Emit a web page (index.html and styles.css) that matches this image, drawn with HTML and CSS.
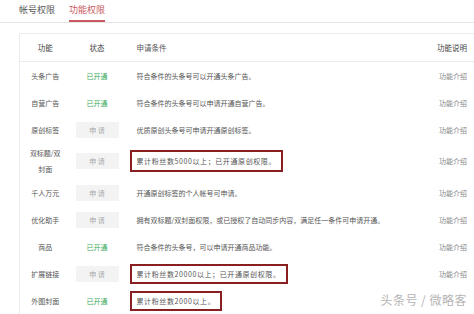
FILE: index.html
```html
<!DOCTYPE html>
<html lang="zh-CN">
<head>
    <meta charset="UTF-8">
    <title>功能权限</title>
    <link rel="stylesheet" href="styles.css">
</head>
<body>
    <!-- Tabs -->
    <div class="tabs">
        <a class="tab">帐号权限</a>
        <a class="tab active">功能权限</a>
    </div>

    <!-- Permission table -->
    <table class="perm-table">
        <colgroup>
            <col class="c-name">
            <col class="c-state">
            <col>
            <col class="c-info">
        </colgroup>
        <thead>
            <tr>
                <th>功能</th>
                <th>状态</th>
                <th class="left"><span class="cond">申请条件</span></th>
                <th class="right">功能说明</th>
            </tr>
        </thead>
        <tbody>
            <tr>
                <td>头条广告</td>
                <td><span class="on">已开通</span></td>
                <td class="left"><span class="cond">符合条件的头条号可以开通头条广告。</span></td>
                <td class="right"><a class="info">功能介绍</a></td>
            </tr>
            <tr>
                <td>自营广告</td>
                <td><span class="on">已开通</span></td>
                <td class="left"><span class="cond">符合条件的头条号可以申请开通自营广告。</span></td>
                <td class="right"><a class="info">功能介绍</a></td>
            </tr>
            <tr>
                <td>原创标签</td>
                <td><span class="btn">申 请</span></td>
                <td class="left"><span class="cond">优质原创头条号可申请开通原创标签。</span></td>
                <td class="right"><a class="info">功能介绍</a></td>
            </tr>
            <tr class="tall">
                <td>双标题/双<br>封面</td>
                <td><span class="btn">申 请</span></td>
                <td class="left"><span class="cond boxed">累计粉丝数5000以上；已开通原创权限。</span></td>
                <td class="right"><a class="info">功能介绍</a></td>
            </tr>
            <tr>
                <td>千人万元</td>
                <td><span class="btn">申 请</span></td>
                <td class="left"><span class="cond">开通原创标签的个人帐号可申请。</span></td>
                <td class="right"><a class="info">功能介绍</a></td>
            </tr>
            <tr>
                <td>优化助手</td>
                <td><span class="btn">申 请</span></td>
                <td class="left"><span class="cond">拥有双标题/双封面权限，或已授权了自动同步内容，满足任一条件可申请开通。</span></td>
                <td class="right"><a class="info">功能介绍</a></td>
            </tr>
            <tr>
                <td>商品</td>
                <td><span class="on">已开通</span></td>
                <td class="left"><span class="cond">符合条件的头条号，可以申请开通商品功能。</span></td>
                <td class="right"><a class="info">功能介绍</a></td>
            </tr>
            <tr>
                <td>扩展链接</td>
                <td><span class="btn">申 请</span></td>
                <td class="left"><span class="cond boxed">累计粉丝数20000以上；已开通原创权限。</span></td>
                <td class="right"><a class="info">功能介绍</a></td>
            </tr>
            <tr>
                <td>外图封面</td>
                <td><span class="on">已开通</span></td>
                <td class="left"><span class="cond boxed">累计粉丝数2000以上。</span></td>
                <td class="right"></td>
            </tr>
        </tbody>
    </table>

    <div class="watermark">头条号 / 微略客</div>
</body>
</html>
```

FILE: styles.css
```css
/* Page */
html, body {
    margin: 0;
    padding: 0;
    height: 314px;
    overflow: hidden;
    background: #fff;
}

body {
    position: relative;
    font-family: "Noto Sans CJK SC", "Noto Sans", sans-serif;
    color: #555;
}

/* Tabs */
.tabs {
    display: flex;
    gap: 14px;
    height: 22px;
    padding-left: 19px;
    border-bottom: 1px solid #e6e6e6;
}

.tab {
    font-size: 9px;
    line-height: 20px;
    color: #555;
    border-bottom: 2px solid transparent;
}

.tab.active {
    color: #c9585e;
    border-bottom-color: #c9585e;
}

/* Table */
.perm-table {
    margin: 10px 0 0 19px;
    width: 457px;
    table-layout: fixed;
    border-collapse: collapse;
    border: 1px solid #ebebeb;
    font-size: 7px;
}

.c-name { width: 51px; }
.c-state { width: 53px; }
.c-info { width: 60px; }

.perm-table th,
.perm-table td {
    height: 27px;
    padding: 0;
    text-align: center;
    font-weight: normal;
    line-height: 14px;
    white-space: nowrap;
}

.perm-table th {
    color: #444;
    font-size: 7.5px;
    border-bottom: 1px solid #ebebeb;
}

.perm-table tr.tall td {
    height: 36px;
    line-height: 16px;
}

.perm-table .left {
    text-align: left;
    padding-left: 6px;
}

.perm-table .right {
    text-align: right;
    padding-right: 8px;
}

.cond {
    display: inline-block;
    padding: 1px 5px;
    border: 2px solid transparent;
    color: #555;
}

.cond.boxed {
    border-color: #8a1f22;
    letter-spacing: 0.6px;
}

.on {
    color: #3dab5c;
}

.btn {
    display: inline-block;
    width: 43px;
    height: 16px;
    line-height: 16px;
    background: #f3f3f3;
    color: #a8a8a8;
}

.info {
    color: #888;
}

/* Watermark */
.watermark {
    position: absolute;
    right: 7px;
    bottom: 6px;
    font-size: 12px;
    color: #b5b5b5;
    letter-spacing: 0.5px;
}
```
